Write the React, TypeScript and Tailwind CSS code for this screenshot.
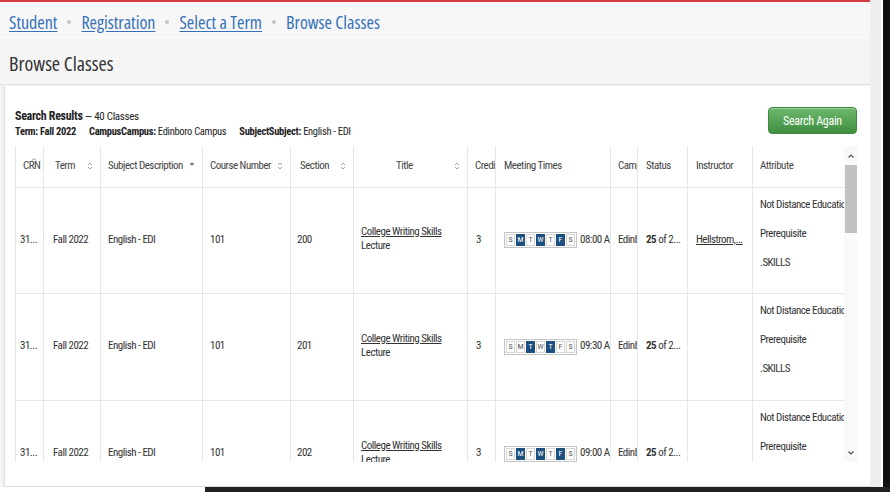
type Row = {
  crn: string;
  section: string;
  days: boolean[];
  time: string;
  instructor?: string;
  attrs: string[];
};

const rows: Row[] = [
  {
    crn: "31...",
    section: "200",
    days: [false, true, false, true, false, true, false],
    time: "08:00 AM",
    instructor: "Hellstrom,...",
    attrs: ["Not Distance Education", "Prerequisite", ".SKILLS"],
  },
  {
    crn: "31...",
    section: "201",
    days: [false, false, true, false, true, false, false],
    time: "09:30 AM",
    attrs: ["Not Distance Education", "Prerequisite", ".SKILLS"],
  },
  {
    crn: "31...",
    section: "202",
    days: [false, true, false, true, false, true, false],
    time: "09:00 AM",
    attrs: ["Not Distance Education", "Prerequisite", ".SKILLS"],
  },
];

const dayLetters = ["S", "M", "T", "W", "T", "F", "S"];

function SortIcon() {
  return (
    <svg width="6" height="10" viewBox="0 0 6 10" className="shrink-0">
      <path d="M1 4 L3 2 L5 4 M1 6 L3 8 L5 6" fill="none" stroke="#9a9a9a" strokeWidth="0.9" />
    </svg>
  );
}

function SortDown() {
  return (
    <svg width="6" height="10" viewBox="0 0 6 10" className="shrink-0">
      <path d="M0.5 2 L5.5 2 L3 5 Z" fill="#777" />
    </svg>
  );
}

function Days({ days }: { days: boolean[] }) {
  return (
    <div className="flex shrink-0 gap-[1px] border border-[#c4c4c4] p-[1px]">
      {dayLetters.map((d, i) => (
        <span
          key={i}
          className={
            days[i]
              ? "flex h-[12px] w-[9px] items-center justify-center bg-[#1c4e7e] text-[8px] leading-none tracking-normal text-white"
              : "flex h-[12px] w-[9px] items-center justify-center border border-[#d6d6d6] text-[8px] leading-none tracking-normal text-[#555]"
          }
        >
          {d}
        </span>
      ))}
    </div>
  );
}

const th = "h-[41px] border-b border-l border-[#e6e6e6] px-[7px] text-left align-middle font-normal text-[#444]";
const td = "border-b border-l border-[#e6e6e6] px-[7px] align-middle text-[#333]";

export default function App() {
  return (
    <div className="flex h-[492px] w-[890px] flex-col overflow-hidden bg-black">
      <div className="flex h-[487px]">
        <div className="flex w-[870px] flex-col bg-[#f4f4f4]">
          <div className="h-[2px] bg-[#d23a3e]" />

          {/* breadcrumb */}
          <div className="flex h-[36px] items-center border-b border-[#fbfbfb] bg-[#f7f7f8] px-[9px] pt-[5px] font-['Open_Sans'] text-[18px] text-[#3571b8] [font-stretch:75%]">
            <a className="underline underline-offset-2">Student</a>
            <span className="mx-[10px] h-[4px] w-[4px] rounded-full bg-[#c4c4c4]" />
            <a className="underline underline-offset-2">Registration</a>
            <span className="mx-[10px] h-[4px] w-[4px] rounded-full bg-[#c4c4c4]" />
            <a className="underline underline-offset-2">Select a Term</a>
            <span className="mx-[10px] h-[4px] w-[4px] rounded-full bg-[#c4c4c4]" />
            <span>Browse Classes</span>
          </div>

          {/* page title */}
          <div className="flex h-[47px] items-center border-b border-[#e2e2e2] bg-[#f5f5f5] px-[9px] pt-[6px] font-['Open_Sans'] text-[20px] text-[#333] [font-stretch:75%]">
            Browse Classes
          </div>

          {/* results panel */}
          <div className="ml-[4px] mt-[1px] flex flex-1 flex-col border-b border-l border-[#dcdcdc] bg-white pl-[10px] pr-[13px] pt-[21px] font-['Roboto_Condensed'] shadow-[0_1px_2px_rgba(0,0,0,0.08)]">
            <div className="flex items-start justify-between">
              <div className="pt-[2px]">
                <div className="text-[12px] leading-[15px] tracking-[-0.3px] text-[#222]">
                  <span className="font-bold">Search Results</span>
                  <span className="text-[11px]"> — 40 Classes</span>
                </div>
                <div className="text-[10.5px] leading-[15px] tracking-[-0.3px] text-[#222]">
                  <span className="font-bold">Term: Fall 2022</span>
                  <span className="ml-[13px] font-bold">CampusCampus:</span> Edinboro Campus
                  <span className="ml-[13px] font-bold">SubjectSubject:</span> English - EDI
                </div>
              </div>
              <button className="h-[27px] w-[89px] rounded-[4px] border border-[#3f863f] bg-linear-to-b from-[#6db96d] to-[#3f8e3f] text-[12px] tracking-[-0.3px] text-white shadow-[inset_0_1px_0_rgba(255,255,255,0.3)]">
                Search Again
              </button>
            </div>

            <div className="mt-[7px] flex h-[316px] overflow-hidden">
              <div className="w-[829px] overflow-hidden">
                <table className="w-[829px] table-fixed border-collapse text-[11px] tracking-[-0.5px]">
                  <colgroup>
                    <col className="w-[28px]" />
                    <col className="w-[57px]" />
                    <col className="w-[102px]" />
                    <col className="w-[88px]" />
                    <col className="w-[63px]" />
                    <col className="w-[114px]" />
                    <col className="w-[28px]" />
                    <col className="w-[115px]" />
                    <col className="w-[27px]" />
                    <col className="w-[50px]" />
                    <col className="w-[65px]" />
                    <col className="w-[92px]" />
                  </colgroup>
                  <thead>
                    <tr>
                      <th className={th + " relative pl-[7px]"}>
                        CRN
                        <svg width="6" height="4" viewBox="0 0 6 4" className="absolute left-[15px] top-[11px]">
                          <path d="M1 3.5 L3 1.5 L5 3.5" fill="none" stroke="#888" strokeWidth="0.9" />
                        </svg>
                      </th>
                      <th className={th}>
                        <div className="flex items-center justify-between pl-[4px]">
                          Term <SortIcon />
                        </div>
                      </th>
                      <th className={th}>
                        <div className="flex items-center justify-between">
                          <span className="whitespace-nowrap">Subject Description</span> <SortDown />
                        </div>
                      </th>
                      <th className={th}>
                        <div className="flex items-center justify-between">
                          <span className="whitespace-nowrap">Course Number</span> <SortIcon />
                        </div>
                      </th>
                      <th className={th}>
                        <div className="flex items-center justify-between pl-[2px]">
                          Section <SortIcon />
                        </div>
                      </th>
                      <th className={th}>
                        <div className="flex items-center justify-between pl-[35px]">
                          Title <SortIcon />
                        </div>
                      </th>
                      <th className={th + " overflow-hidden whitespace-nowrap"}>Credit Hours</th>
                      <th className={th + " whitespace-nowrap pl-[8px]"}>Meeting Times</th>
                      <th className={th + " overflow-hidden whitespace-nowrap"}>Campus</th>
                      <th className={th + " pl-[8px]"}>Status</th>
                      <th className={th + " pl-[8px]"}>Instructor</th>
                      <th className={th}>Attribute</th>
                    </tr>
                  </thead>
                  <tbody>
                    {rows.map((r, i) => (
                      <tr key={r.section} className={i === 0 ? "h-[106px]" : "h-[107px]"}>
                        <td className={td + " whitespace-nowrap pl-[4px] pr-0"}>{r.crn}</td>
                        <td className={td + " whitespace-nowrap pl-[9px]"}>Fall 2022</td>
                        <td className={td + " whitespace-nowrap"}>English - EDI</td>
                        <td className={td}>101</td>
                        <td className={td + " pl-[6px]"}>{r.section}</td>
                        <td className={td}>
                          <div className="-mt-[2px] whitespace-nowrap leading-[14px]">
                            <a className="underline underline-offset-1">College Writing Skills</a>
                            <div>Lecture</div>
                          </div>
                        </td>
                        <td className={td + " pl-[8px]"}>3</td>
                        <td className={td + " overflow-hidden pl-[8px] pr-0"}>
                          <div className="flex items-center gap-[3px] whitespace-nowrap">
                            <Days days={r.days} />
                            <span>{r.time}</span>
                          </div>
                        </td>
                        <td className={td + " overflow-hidden whitespace-nowrap pr-0"}>Edinboro</td>
                        <td className={td + " overflow-hidden whitespace-nowrap pl-[8px] pr-0"}>
                          <span className="font-bold">25</span> of 2...
                        </td>
                        <td className={td + " overflow-hidden whitespace-nowrap pl-[8px] pr-0"}>
                          {r.instructor && <a className="underline underline-offset-1">{r.instructor}</a>}
                        </td>
                        <td className={td + " overflow-hidden whitespace-nowrap pr-0 pt-[2px] align-top"}>
                          <div className="flex flex-col">
                            {r.attrs.map((a) => (
                              <span key={a} className="leading-[29px]">
                                {a}
                              </span>
                            ))}
                          </div>
                        </td>
                      </tr>
                    ))}
                  </tbody>
                </table>
              </div>

              {/* vertical scrollbar */}
              <div className="flex w-[13px] flex-col items-center bg-[#f9f9f9]">
                <svg width="8" height="6" viewBox="0 0 8 6" className="mt-[7px]">
                  <path d="M1.5 4.5 L4 2 L6.5 4.5" fill="none" stroke="#555" strokeWidth="1.2" />
                </svg>
                <div className="mt-[6px] h-[68px] w-[12px] bg-[#c1c1c1]" />
                <div className="flex-1" />
                <svg width="8" height="6" viewBox="0 0 8 6" className="mb-[6px]">
                  <path d="M1.5 1.5 L4 4 L6.5 1.5" fill="none" stroke="#555" strokeWidth="1.2" />
                </svg>
              </div>
            </div>
          </div>
        </div>

        {/* browser gutter */}
        <div className="w-[13px] border-r-[2px] border-white bg-[#efefef]" />
        <div className="flex-1 bg-[#111]" />
      </div>
      <div className="flex h-[5px]">
        <div className="w-[205px] bg-white" />
        <div className="flex-1 bg-[#222]" />
      </div>
    </div>
  );
}
